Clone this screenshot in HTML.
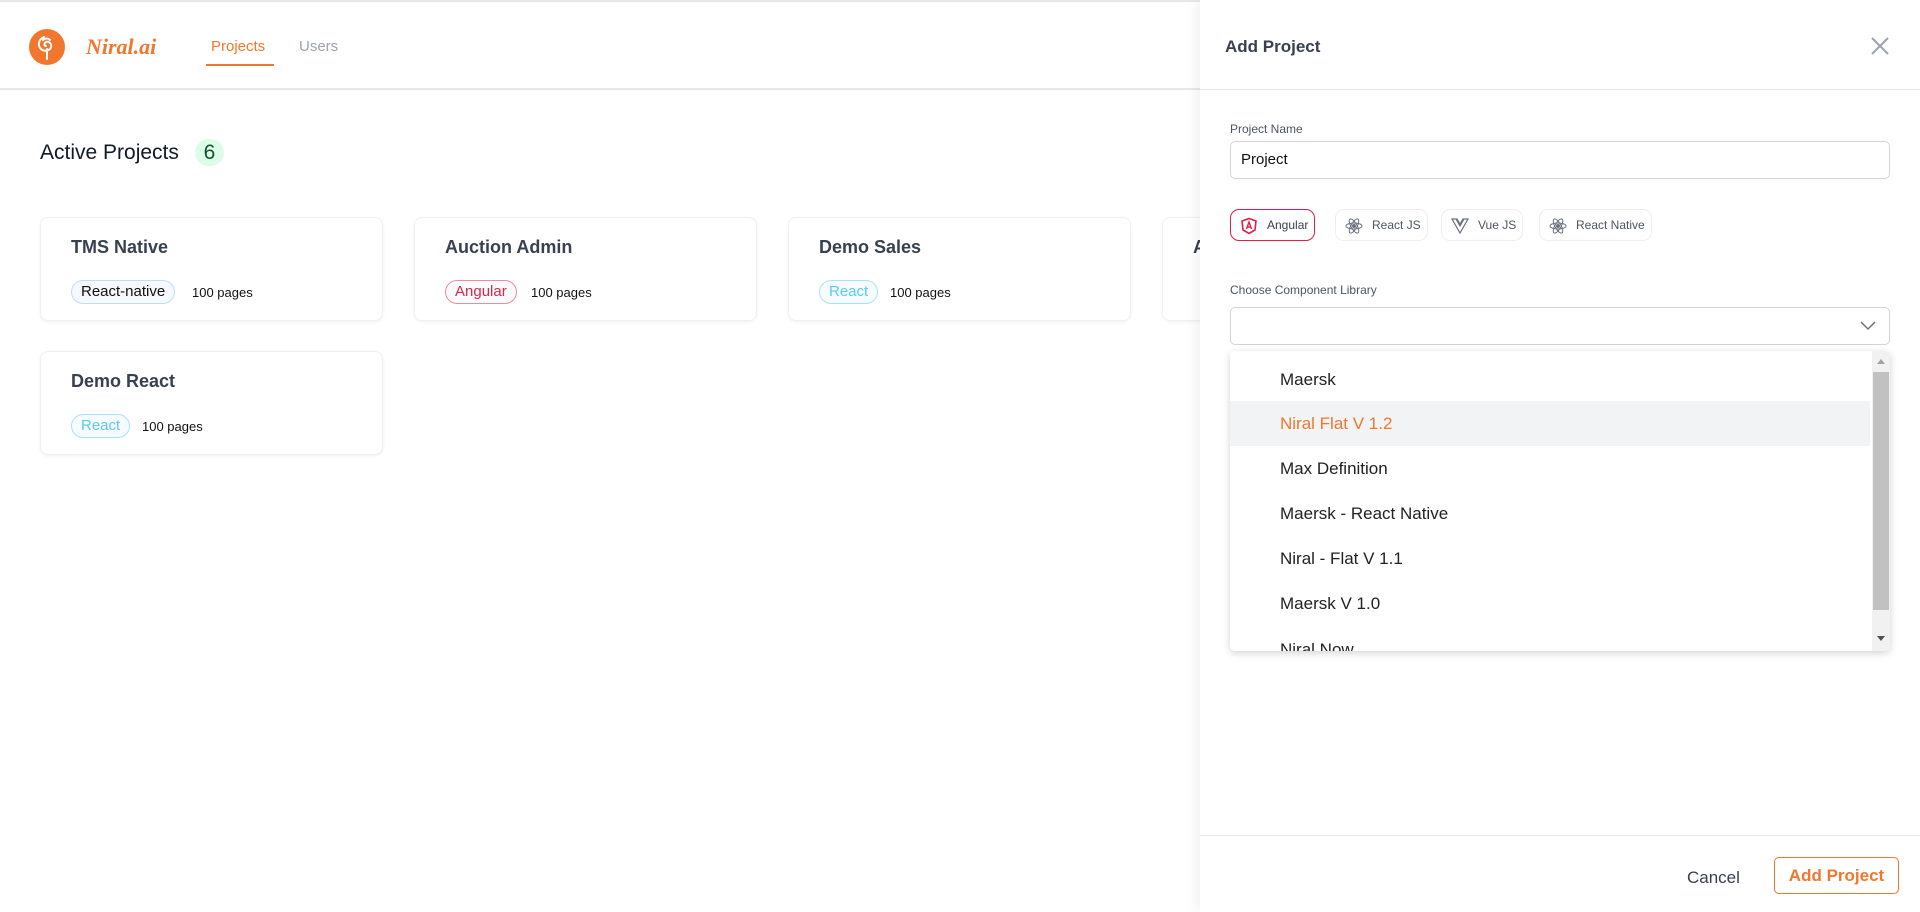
<!DOCTYPE html>
<html><head><meta charset="utf-8"><style>
*{box-sizing:border-box;margin:0;padding:0}
body{width:1920px;height:912px;overflow:hidden;background:#fff;font-family:"Liberation Sans",sans-serif;position:relative;color:#1f2937}
.abs{position:absolute}
.hdr{left:0;top:0;width:1920px;height:90px;border-top:2px solid #e5e7eb;border-bottom:2px solid #e5e7eb}
.card{position:absolute;width:343px;height:104px;border:1px solid #eef0f2;border-radius:8px;box-shadow:0 1px 3px rgba(0,0,0,.06);background:#fff}
.card h3{position:absolute;left:30px;top:19px;font-size:18px;font-weight:bold;color:#374151}
.tag{position:absolute;left:30px;top:62px;height:24px;padding:0 9px;border-radius:12px;font-size:15px;line-height:22px;border:1px solid;white-space:nowrap}
.pg{position:absolute;top:67px;font-size:13px;color:#111;white-space:nowrap}
.panel{left:1200px;top:0;width:720px;height:912px;background:#fff;box-shadow:-4px 0 12px rgba(0,0,0,.06)}
.chip{position:absolute;top:209px;height:32px;border:1px solid #eceef1;border-radius:9px;font-size:12px;color:#4b5563;line-height:30px;padding-left:36px;padding-right:6px;white-space:nowrap}
.chip svg{position:absolute;left:9px;top:7px}
.item{position:absolute;left:0;width:640px;height:45px;font-size:17px;line-height:45px;padding-left:50px;color:#222}
</style></head><body>
<div class="abs hdr"></div>
<svg class="abs" style="left:29px;top:29px" width="36" height="36" viewBox="0 0 36 36"><circle cx="18" cy="18" r="18" fill="#f0772d"/><path d="M15 8c-5 2-7 8-3 12 3 3 9 2 10-2 1-3-2-6-5-5-2 1-2 4 0 4M18 20v10M14 11c2-2 5-2 7 0" stroke="#fff" stroke-width="2" fill="none" stroke-linecap="round"/></svg>
<div class="abs" style="left:86px;top:34px;font-family:'Liberation Serif',serif;font-style:italic;font-weight:bold;font-size:22px;color:#f0772d">Niral.ai</div>
<div class="abs" style="left:211px;top:38px;font-size:15px;color:#f0772d">Projects</div>
<div class="abs" style="left:206px;top:64px;width:68px;height:2px;background:#f0772d"></div>
<div class="abs" style="left:299px;top:38px;font-size:15px;color:#9ca3af">Users</div>
<div class="abs" style="left:40px;top:141px;font-size:21px;color:#111827">Active Projects</div>
<div class="abs" style="left:195px;top:139px;width:29px;height:27px;border-radius:14px;background:#dcfce7;color:#14532d;font-size:21px;text-align:center;line-height:27px">6</div>

<div class="card" style="left:40px;top:217px"><h3>TMS Native</h3><span class="tag" style="border-color:#bfdbfe;background:#f5f8fc;color:#111">React-native</span><span class="pg" style="left:151px">100 pages</span></div>
<div class="card" style="left:414px;top:217px"><h3>Auction Admin</h3><span class="tag" style="border-color:#ea8d9c;background:#fdfafb;color:#d6274a">Angular</span><span class="pg" style="left:116px">100 pages</span></div>
<div class="card" style="left:788px;top:217px"><h3>Demo Sales</h3><span class="tag" style="border-color:#a5e4f7;background:#f5fbfe;color:#5cc9ef">React</span><span class="pg" style="left:101px">100 pages</span></div>
<div class="card" style="left:1162px;top:217px"><h3>A</h3></div>
<div class="card" style="left:40px;top:351px"><h3>Demo React</h3><span class="tag" style="border-color:#a5e4f7;background:#f5fbfe;color:#5cc9ef">React</span><span class="pg" style="left:101px">100 pages</span></div>

<div class="abs panel">
 <div class="abs" style="left:25px;top:37px;font-size:17px;font-weight:bold;color:#374151">Add Project</div>
 <svg class="abs" style="left:671px;top:37px" width="18" height="18" viewBox="0 0 18 18"><path d="M1 1L17 17M17 1L1 17" stroke="#9ca3af" stroke-width="2"/></svg>
 <div class="abs" style="left:0;top:89px;width:720px;height:1px;background:#e5e7eb"></div>
 <div class="abs" style="left:30px;top:122px;font-size:12px;color:#4b5563">Project Name</div>
 <div class="abs" style="left:30px;top:141px;width:660px;height:38px;border:1px solid #d1d5db;border-radius:5px;font-size:15px;line-height:36px;padding-left:10px;color:#111">Project</div>
 <div class="chip" style="left:30px;border-color:#e11d48;color:#374151">Angular<svg width="18" height="18" viewBox="0 0 18 18"><path d="M9 1.5L2 4l1 9 6 3.5 6-3.5 1-9z" fill="none" stroke="#e11d48" stroke-width="1.6"/><path d="M6.5 12L9 5l2.5 7M7.3 10h3.4" fill="none" stroke="#e11d48" stroke-width="1.4"/></svg></div>
 <div class="chip" style="left:135px">React JS<svg width="18" height="18" viewBox="0 0 18 18" fill="none" stroke="#6b7280" stroke-width="1"><ellipse cx="9" cy="9" rx="8" ry="3"/><ellipse cx="9" cy="9" rx="8" ry="3" transform="rotate(60 9 9)"/><ellipse cx="9" cy="9" rx="8" ry="3" transform="rotate(120 9 9)"/><circle cx="9" cy="9" r="1.5" fill="#6b7280"/></svg></div>
 <div class="chip" style="left:241px">Vue JS<svg width="18" height="18" viewBox="0 0 18 18" fill="none" stroke="#6b7280" stroke-width="1.2"><path d="M1 2h5l3 5 3-5h5L9 16z M5 2l4 7 4-7"/></svg></div>
 <div class="chip" style="left:339px">React Native<svg width="18" height="18" viewBox="0 0 18 18" fill="none" stroke="#6b7280" stroke-width="1"><ellipse cx="9" cy="9" rx="8" ry="3"/><ellipse cx="9" cy="9" rx="8" ry="3" transform="rotate(60 9 9)"/><ellipse cx="9" cy="9" rx="8" ry="3" transform="rotate(120 9 9)"/><circle cx="9" cy="9" r="1.5" fill="#6b7280"/></svg></div>
 <div class="abs" style="left:30px;top:283px;font-size:12px;color:#4b5563">Choose Component Library</div>
 <div class="abs" style="left:30px;top:307px;width:660px;height:38px;border:1px solid #d1d5db;border-radius:5px"></div>
 <svg class="abs" style="left:660px;top:321px" width="16" height="10" viewBox="0 0 16 10"><path d="M1 1l7 7 7-7" stroke="#6b7280" stroke-width="1.5" fill="none"/></svg>
 <div class="abs" style="left:30px;top:351px;width:660px;height:300px;background:#fff;border-radius:5px;box-shadow:0 2px 8px rgba(0,0,0,.18);overflow:hidden">
  <div class="item" style="top:6px">Maersk</div>
  <div class="item" style="top:50px;background:#f2f3f5;color:#f0772d">Niral Flat V 1.2</div>
  <div class="item" style="top:95px">Max Definition</div>
  <div class="item" style="top:140px">Maersk - React Native</div>
  <div class="item" style="top:185px">Niral - Flat V 1.1</div>
  <div class="item" style="top:230px">Maersk V 1.0</div>
  <div class="item" style="top:276px">Niral Now</div>
  <div class="abs" style="left:642px;top:0;width:18px;height:300px;background:#f1f1f1"></div>
  <div class="abs" style="left:643px;top:21px;width:16px;height:238px;background:#c1c1c1"></div>
  <div class="abs" style="left:647px;top:8px;border:4px solid transparent;border-bottom:5px solid #a3a3a3;border-top:0"></div>
  <div class="abs" style="left:647px;top:285px;border:4px solid transparent;border-top:5px solid #505050;border-bottom:0"></div>
 </div>
 <div class="abs" style="left:0;top:835px;width:720px;height:1px;background:#e5e7eb"></div>
 <div class="abs" style="left:487px;top:868px;font-size:17px;color:#374151">Cancel</div>
 <div class="abs" style="left:574px;top:857px;width:125px;height:37px;border:1px solid #f0772d;border-radius:5px;color:#f0772d;font-size:17px;font-weight:bold;text-align:center;line-height:35px">Add Project</div>
</div>
</body></html>
